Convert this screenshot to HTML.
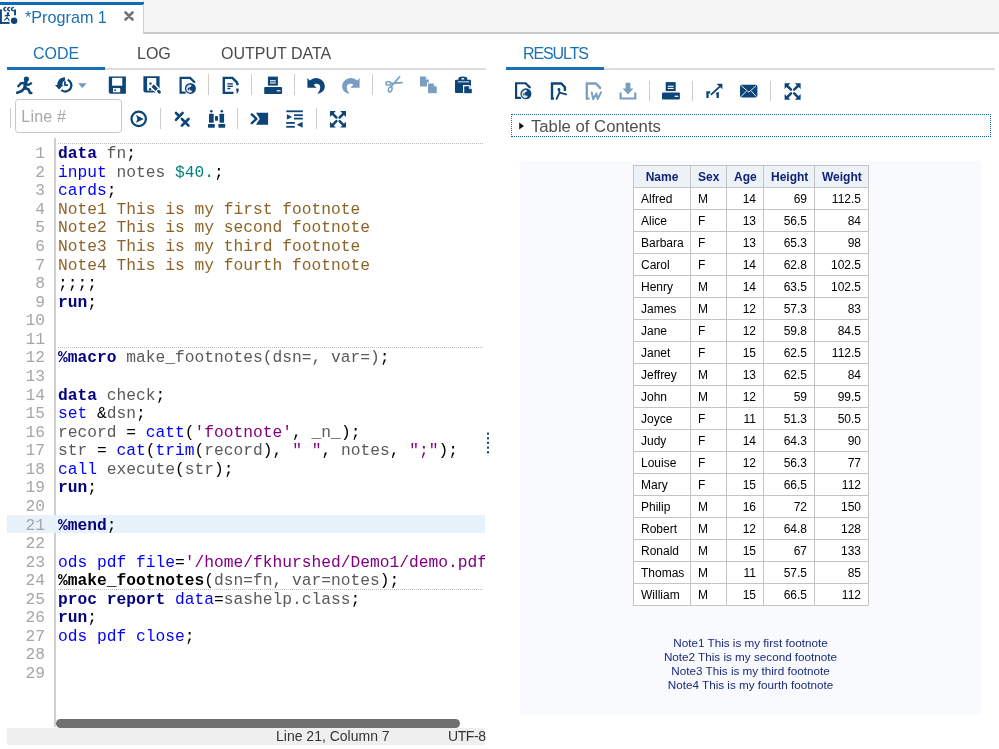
<!DOCTYPE html>
<html><head><meta charset="utf-8">
<style>
*{margin:0;padding:0;box-sizing:border-box}
html,body{width:999px;height:749px;overflow:hidden;background:#fff;font-family:"Liberation Sans",sans-serif}
.a{position:absolute}
#topbar{left:0;top:0;width:999px;height:34px;background:#f5f5f5;border-bottom:2px solid #c9c9c9}
#ptab{left:0;top:0;width:144px;height:34px;background:#fff;border-top:2px solid #f5f5f5;border-right:1px solid #cfcfcf}
#ptab .bl{left:0;top:0;width:143px;height:2.5px;background:#0d6ab4}
.tabt{font-size:16px;color:#4a4a4a;white-space:nowrap}
.sel{color:#1a70b5}
.sep{width:1px;background:#cdcdcd}
.ico{position:absolute}
#code{left:0;top:0}
.ln{position:absolute;left:0;width:45px;text-align:right;font-family:"Liberation Mono",monospace;font-size:16.25px;color:#a6a6a6;line-height:18.57px;height:18.57px}
.cl{position:absolute;left:58px;font-family:"Liberation Mono",monospace;font-size:16.25px;line-height:18.57px;height:18.57px;white-space:pre;color:#000}
.k{color:#000080;font-weight:bold}
.b{color:#0000ff}
.g{color:#5a5a5a}
.t{color:#008080}
.br{color:#8c6428}
.p{color:#800080}
.bk{color:#000;font-weight:bold}
.dot{position:absolute;left:58px;width:425px;height:0;border-top:1px dotted #bdbdbd}
table{border-collapse:collapse;table-layout:fixed;width:235px;font-family:"Liberation Sans",sans-serif;font-size:12px}
td,th{border:1px solid #c4c4c4;height:22px;padding:0 7px;color:#000;font-weight:normal;background:#fff}
th{background:#edf2f9;color:#112277;font-weight:bold;text-align:center}
td.r{text-align:right}
</style></head><body><div style="position:absolute;left:0;top:0;width:999px;height:749px;will-change:transform">
<!-- top tab bar -->
<div id="topbar" class="a"></div>
<div id="ptab" class="a"></div>
<div class="a" style="left:0;top:2px;width:144px;height:2.5px;background:#0d6ab4"></div>
<div class="a" style="left:143px;top:4px;width:1px;height:30px;background:#cfcfcf"></div>
<div class="a tabt sel" style="left:25px;top:7.6px;font-size:16.2px">*Program 1</div>
<svg class="ico" style="left:0;top:0" width="20" height="30" viewBox="0 0 20 30"><g fill="#0e4579"><rect x="0" y="9.4" width="1.9" height="14.5"/><rect x="0" y="22" width="9.6" height="1.9"/><rect x="14.1" y="9.2" width="1.9" height="6.3" rx="0.9"/><circle cx="14.1" cy="20.7" r="3.2"/></g><g fill="none" stroke="#0e4579" stroke-width="1.5" stroke-linecap="round"><path d="M5.6 7.4C4.3 7.6 3.9 8.4 3.9 9.1C3.9 9.8 4.3 10.6 5.6 10.8M9.4 7.4C8.1 7.6 7.7 8.4 7.7 9.1C7.7 9.8 8.1 10.6 9.4 10.8M13.2 7.4C11.9 7.6 11.5 8.4 11.5 9.1C11.5 9.8 11.9 10.6 13.2 10.8"/></g><g stroke="#0e4579" stroke-width="1.1" fill="none" stroke-linecap="round"><circle cx="8" cy="13.6" r="0.8" fill="#0e4579"/><path d="M7.6 14.8L6.8 17.8M5 16L6.4 15.2L9.6 15.6M6.8 17.8L4.6 20.2M6.8 17.8L8.8 19.2L9 20.6"/></g></svg>
<svg class="ico" style="left:123.8px;top:11px" width="10" height="10" viewBox="0 0 10 10"><path d="M1.5 1.5L8.5 8.5M8.5 1.5L1.5 8.5" stroke="#747474" stroke-width="2.6" stroke-linecap="round"/></svg>

<!-- code tabs -->
<div class="a tabt sel" style="left:33px;top:44.5px">CODE</div>
<div class="a tabt" style="left:137px;top:44.5px">LOG</div>
<div class="a tabt" style="left:221px;top:44.5px">OUTPUT DATA</div>
<div class="a" style="left:7px;top:68px;width:479px;height:1.5px;background:#dcdcdc"></div>
<div class="a" style="left:7px;top:67px;width:98px;height:3px;background:#1a70b5"></div>

<div class="a tabt sel" style="left:523px;top:44.5px;letter-spacing:-1.1px">RESULTS</div>
<div class="a" style="left:506px;top:68px;width:489px;height:1.5px;background:#dcdcdc"></div>
<div class="a" style="left:506px;top:67px;width:98px;height:3px;background:#1a70b5"></div>

<!-- toolbar separators -->
<div class="a sep" style="left:208px;top:74px;height:21px"></div>
<div class="a sep" style="left:251px;top:74px;height:21px"></div>
<div class="a sep" style="left:294px;top:74px;height:21px"></div>
<div class="a sep" style="left:372px;top:74px;height:21px"></div>
<div class="a sep" style="left:10px;top:108px;height:20px"></div>
<div class="a sep" style="left:160px;top:108px;height:21px"></div>
<div class="a sep" style="left:237px;top:108px;height:21px"></div>
<div class="a sep" style="left:316px;top:108px;height:21px"></div>
<div class="a sep" style="left:649px;top:80.5px;height:20px"></div>
<div class="a sep" style="left:692px;top:80.5px;height:20px"></div>
<div class="a sep" style="left:770px;top:80.5px;height:20px"></div>

<!-- line # input -->
<div class="a" style="left:15px;top:98.5px;width:106.5px;height:34.5px;border:1px solid #c8c8c8;border-radius:3.5px;background:#fff"></div>
<div class="a" style="left:21.3px;top:107.8px;font-size:16px;color:#a8a8a8;letter-spacing:0.2px">Line #</div>

<svg class="ico" style="left:0;top:0" width="999" height="749" viewBox="0 0 999 749">
<defs>
<g id="printer">
 <rect x="267.9" y="76.6" width="10" height="9" fill="#0e4579"/>
 <rect x="270" y="80.2" width="5.8" height="1.1" fill="#fff"/>
 <rect x="270" y="82.4" width="5.8" height="1.1" fill="#fff"/>
 <rect x="264.2" y="87.1" width="17.9" height="6.9" rx="1" fill="#0e4579"/>
 <rect x="276.8" y="90.2" width="3.7" height="1.2" fill="#fff"/>
</g>
<g id="expand" fill="#0e4579" stroke="#0e4579" stroke-width="2.5" stroke-linecap="round">
 <path d="M330 111.1H335.8L330 116.9Z" stroke="none"/><path d="M332.2 113.3L336.4 117.5"/>
 <path d="M346 111.1H340.2L346 116.9Z" stroke="none"/><path d="M343.8 113.3L339.6 117.5"/>
 <path d="M330 127.6H335.8L330 121.8Z" stroke="none"/><path d="M332.2 125.4L336.4 121.2"/>
 <path d="M346 127.6H340.2L346 121.8Z" stroke="none"/><path d="M343.8 125.4L339.6 121.2"/>
</g>
<g id="docglobe">
 <path d="M185 92.55H180.6V77.85H190.1L194.3 82" fill="none" stroke="#0e4579" stroke-width="2.2" stroke-linecap="round"/>
 <circle cx="190.4" cy="88.4" r="6.3" fill="#fff"/>
 <circle cx="190.4" cy="88.4" r="5.5" fill="#0e4579"/>
 <path d="M189.6 84.4C187.4 85 186.2 86.8 186.2 88.8C186.2 90.8 187.6 92.4 189.8 92.8C191.4 92.4 192.4 91.6 192.2 90.4C191 90.6 189.8 90.2 189.6 89.4C189.2 88.4 188.8 87.8 189.4 87.2C190.4 87 191.4 86.6 191.6 85.4C191.2 84.8 190.4 84.4 189.6 84.4Z" fill="#fff" opacity="0.85"/>
 <path d="M188 87.6L189.2 88.6L188.6 90.4L187.6 89.4Z" fill="#0e4579"/>
</g>
</defs>
<!-- row1 code toolbar -->
<g stroke="#0e4579" stroke-linecap="round" stroke-linejoin="round" fill="none">
 <circle cx="26.4" cy="79" r="2.6" fill="#0e4579" stroke="none"/>
 <path d="M25.9 81.5L24.7 88" stroke-width="3.4"/>
 <path d="M18.3 86.2L20.9 83.3L24.6 83" stroke-width="2.4"/>
 <path d="M25.5 83.9L28.5 84.9L31.2 83.3" stroke-width="2.2"/>
 <path d="M24.5 88.2L21.8 91L17.2 92.7" stroke-width="2.6"/>
 <path d="M25 88L28.6 89.5L30 93L31.3 93" stroke-width="2.6"/>
</g>
<path d="M67.7 79.8 A6.1 6.1 0 1 1 61.3 90" fill="none" stroke="#0e4579" stroke-width="2.3"/>
<path d="M64.9 77.3C60.2 77.5 57.3 80.6 57.3 85L55 85L59.1 89.5L63.3 85L62.3 85C62.3 82.6 63.3 81.1 65.2 80.5Z" fill="#0e4579"/>
<path d="M64.9 81.8V85.1H67.3" fill="none" stroke="#0e4579" stroke-width="1.7" stroke-linecap="round" stroke-linejoin="round"/>
<path d="M78.2 83.3H86.6L82.4 87.9Z" fill="#6f97be"/>
<!-- save -->
<path d="M108.8 76.4H125.9V93.8H110.6Q108.8 93.8 108.8 92Z" fill="#0e4579"/>
<rect x="112.1" y="77.9" width="10.2" height="7.8" fill="#fff"/>
<rect x="113" y="88.1" width="7.2" height="4.2" fill="#fff"/>
<circle cx="115.1" cy="90.2" r="0.9" fill="#0e4579"/>
<!-- save as -->
<path d="M143.4 76.3H159.6V92.4H145.2Q143.4 92.4 143.4 90.6Z" fill="#0e4579"/>
<rect x="147.1" y="78" width="9.2" height="12.6" fill="#fff"/>
<path d="M150.5 83.6L159.4 92.2" stroke="#fff" stroke-width="6" stroke-linecap="round"/>
<path d="M152.6 85.6L156.8 89.8" stroke="#0e4579" stroke-width="3.4"/>
<path d="M158.5 91.3L159.5 92.3" stroke="#0e4579" stroke-width="2.8" stroke-linecap="round"/>
<circle cx="150.5" cy="83.6" r="1.3" fill="#2d5a88"/>
<circle cx="150.1" cy="89.3" r="1.2" fill="#0e4579"/>
<!-- export doc globe -->
<use href="#docglobe"/>
<!-- doc lines -->
<path d="M233.5 92.9H223.8V77.9H232.4L236.6 82.1V83" fill="none" stroke="#0e4579" stroke-width="2.4"/>
<rect x="227.4" y="83.2" width="5.5" height="1.4" fill="#0e4579"/>
<rect x="227.4" y="85.6" width="5.5" height="1.4" fill="#0e4579"/>
<rect x="227.4" y="87.9" width="3" height="1.4" fill="#0e4579"/>
<circle cx="237.4" cy="84" r="1.4" fill="#0e4579"/>
<path d="M236.2 88.4H238.6V90.8C238.6 92 237.8 93 236.6 93.6L236.2 93C236.8 92.4 237 91.8 237 91.2H236.2Z" fill="#0e4579"/>
<!-- printer -->
<use href="#printer"/>
<!-- undo -->
<path id="undoP" d="M307.4 78L309.8 80.4C311.8 78.9 313.8 78 316 78C321 78 324.8 81.8 324.8 86.3C324.8 90.5 321.5 93.6 317.3 93.6C319.5 91.8 320.2 89.2 320.2 87C320.2 85 318.5 83.8 316.2 83.8C315.2 83.8 314.4 84.3 313.8 85L316.6 87.8H307.4Z" fill="#0e4579"/>
<!-- redo -->
<g transform="translate(667,0) scale(-1,1)">
<path d="M307.4 78L309.8 80.4C311.8 78.9 313.8 78 316 78C321 78 324.8 81.8 324.8 86.3C324.8 90.5 321.5 93.6 317.3 93.6C319.5 91.8 320.2 89.2 320.2 87C320.2 85 318.5 83.8 316.2 83.8C315.2 83.8 314.4 84.3 313.8 85L316.6 87.8H307.4Z" fill="#789dc0"/>
</g>
<!-- scissors -->
<g fill="none" stroke="#7a9ec0" stroke-width="1.5">
 <ellipse cx="388.4" cy="83.4" rx="2.5" ry="1.7"/>
 <ellipse cx="390.2" cy="89.4" rx="1.7" ry="2.7" transform="rotate(20 390.2 89.4)"/>
 <path d="M390.8 83.4L402 82.6M391.2 86.6L399.6 76.8" stroke-width="1.7" stroke-linecap="round"/>
</g>
<!-- copy -->
<path d="M420 76.5H425.6L428.8 79.7V86.5H420Z" fill="#7a9ec0"/>
<path d="M426.2 76.8V79.2H428.6" fill="none" stroke="#fff" stroke-width="0.9"/>
<path d="M427.5 83H433.9L437.3 86.4V93.7H427.5Z" fill="#7a9ec0" stroke="#fff" stroke-width="1.1"/>
<path d="M434.3 83.6V86H436.7" fill="none" stroke="#fff" stroke-width="0.9"/>
<!-- paste -->
<rect x="455" y="79.8" width="16" height="13.3" rx="1" fill="#0e4579"/>
<path d="M458.4 80.6V78.6C458.4 77.3 459.6 76.4 462.8 76.4C466 76.4 467.2 77.3 467.2 78.6V80.6Z" fill="#0e4579"/>
<rect x="461.6" y="78.1" width="2.6" height="1.4" fill="#fff"/>
<rect x="457.8" y="81.4" width="11.4" height="0.9" fill="#fff"/>
<path d="M463.6 85.6H469.2L472.4 88.8V93.8H463.6Z" fill="#0e4579" stroke="#fff" stroke-width="1.2"/>
<path d="M469.4 86.2V88.6H471.8" fill="none" stroke="#fff" stroke-width="0.8"/>
<!-- row2 -->
<circle cx="138.7" cy="118.9" r="7.2" fill="none" stroke="#0e4579" stroke-width="2.2"/>
<path d="M136 115L143.8 118.9L136 122.7L137.4 118.9Z" fill="#0e4579"/>
<g stroke="#0e4579" stroke-width="2.6" stroke-linecap="round">
 <path d="M176 113L179.4 116.2M182.6 113L176 119.8"/>
 <path d="M181.9 119L188.5 125.6M188.5 119L181.9 125.6" stroke="#fff" stroke-width="4.4"/>
 <path d="M181.9 119L188.5 125.6M188.5 119L181.9 125.6"/>
</g>
<g fill="#0e4579">
 <circle cx="211.3" cy="111.2" r="1.3"/><circle cx="221.8" cy="111.2" r="1.3"/>
 <rect x="209" y="113.7" width="4.7" height="9" rx="0.6"/>
 <rect x="219.5" y="113.7" width="4.6" height="9" rx="0.6"/>
 <rect x="215" y="116" width="3" height="4.7" rx="0.5"/>
 <rect x="208" y="124" width="6.8" height="3.7" rx="0.6"/>
 <rect x="218.4" y="124" width="6.8" height="3.7" rx="0.6"/>
</g>
<path d="M251.8 114.4L256.4 118.8L251.8 123.2" fill="none" stroke="#0e4579" stroke-width="2.4" stroke-linecap="round" stroke-linejoin="round"/>
<path d="M256 112.7H268.1V124.8H256L259.8 118.8Z" fill="#0e4579"/>
<g fill="#0e4579">
 <rect x="286.3" y="110.4" width="16.5" height="1.8"/>
 <path d="M286.9 114.2V119.6L292.2 116.9Z"/>
 <rect x="294" y="114.3" width="8.8" height="1.8"/>
 <rect x="294" y="117.7" width="8.8" height="1.8"/>
 <rect x="286.2" y="122" width="8.6" height="1.8"/>
 <rect x="286.2" y="125.9" width="8.6" height="1.8"/>
 <path d="M296.6 124.8L302.6 121.8V127.8Z"/>
</g>
<use href="#expand"/>
<!-- results toolbar -->
<use href="#docglobe" transform="translate(335.5,5.4)"/>
<path d="M554 98.6H552V83.5H561.2L564.9 87.2V91" fill="none" stroke="#0e4579" stroke-width="2.4"/>
<circle cx="558.9" cy="89.2" r="1.3" fill="#0e4579"/>
<path d="M559 89.4L559.5 92.6L566.2 94.3M559.5 92.6L556.6 98.8" fill="none" stroke="#0e4579" stroke-width="1.9" stroke-linecap="round" stroke-linejoin="round"/>
<path d="M589.5 98.6H586.8V83.5H595.8L599.9 87.6V89" fill="none" stroke="#7a9ec0" stroke-width="2.3"/>
<path d="M591.6 91.6L593.2 99.2L596.4 93.4L597.6 99.2L601.4 91.6" fill="none" stroke="#7a9ec0" stroke-width="1.9" stroke-linejoin="round"/>
<path d="M625.6 82.7H630.4V88.6H633.4L628 94.6L622.6 88.6H625.6Z" fill="#7a9ec0"/>
<path d="M620.6 92.6V98.5H635.3V92.6" fill="none" stroke="#7a9ec0" stroke-width="2.2"/>
<use href="#printer" transform="translate(397.8,5.5)"/>
<path d="M716.5 83.7H722.4V89.3Z" fill="#0e4579"/>
<path d="M720.8 85.6L711.4 94.4" stroke="#0e4579" stroke-width="1.8" stroke-linecap="round"/>
<path d="M707.5 98V92.3H710.2" fill="none" stroke="#0e4579" stroke-width="2.3"/>
<path d="M717.7 98V93.4L716.2 94" fill="none" stroke="#0e4579" stroke-width="2.3"/>
<rect x="740" y="84.7" width="17.4" height="12.8" rx="1.8" fill="#0e4579"/>
<path d="M741.2 85.6L748.8 92.2L756.3 85.6M741.2 96.6L746.2 91.2M756.3 96.6L751.4 91.2" fill="none" stroke="#fff" stroke-width="0.9"/>
<use href="#expand" transform="translate(454.6,-27.8)"/>
</svg>


<!-- TOC -->
<div class="a" style="left:511px;top:114px;width:480px;height:23px;border:1px dotted #1a6aaa"></div>
<svg class="ico" style="left:518px;top:122px" width="8" height="10"><path d="M1.2 0.4L6 4L1.2 7.6Z" fill="#111"/></svg>
<div class="a" style="left:531px;top:116.6px;font-size:16.7px;color:#505050">Table of Contents</div>

<!-- editor -->
<div class="a" style="left:54px;top:138px;width:1.5px;height:589px;background:#cfcfcf"></div>
<div class="a" style="left:7px;top:514.5px;width:478px;height:18.3px;background:#e8f2fa"></div>
<div class="a" style="left:0;top:0;width:485px;height:720px;overflow:hidden">
<div class="ln" style="top:145.10px">1</div>
<div class="cl" style="top:145.10px"><span class="k">data</span> <span class="g">fn</span>;</div>
<div class="ln" style="top:163.67px">2</div>
<div class="cl" style="top:163.67px"><span class="b">input</span> <span class="g">notes</span> <span class="t">$40.</span>;</div>
<div class="ln" style="top:182.24px">3</div>
<div class="cl" style="top:182.24px"><span class="b">cards</span>;</div>
<div class="ln" style="top:200.81px">4</div>
<div class="cl" style="top:200.81px"><span class="br">Note1 This is my first footnote</span></div>
<div class="ln" style="top:219.38px">5</div>
<div class="cl" style="top:219.38px"><span class="br">Note2 This is my second footnote</span></div>
<div class="ln" style="top:237.95px">6</div>
<div class="cl" style="top:237.95px"><span class="br">Note3 This is my third footnote</span></div>
<div class="ln" style="top:256.52px">7</div>
<div class="cl" style="top:256.52px"><span class="br">Note4 This is my fourth footnote</span></div>
<div class="ln" style="top:275.09px">8</div>
<div class="cl" style="top:275.09px">;;;;</div>
<div class="ln" style="top:293.66px">9</div>
<div class="cl" style="top:293.66px"><span class="k">run</span>;</div>
<div class="ln" style="top:312.23px">10</div>
<div class="cl" style="top:312.23px"></div>
<div class="ln" style="top:330.80px">11</div>
<div class="cl" style="top:330.80px"></div>
<div class="ln" style="top:349.37px">12</div>
<div class="cl" style="top:349.37px"><span class="k">%macro</span> <span class="g">make_footnotes(dsn=, var=)</span>;</div>
<div class="ln" style="top:367.94px">13</div>
<div class="cl" style="top:367.94px"></div>
<div class="ln" style="top:386.51px">14</div>
<div class="cl" style="top:386.51px"><span class="k">data</span> <span class="g">check</span>;</div>
<div class="ln" style="top:405.08px">15</div>
<div class="cl" style="top:405.08px"><span class="b">set</span> &amp;<span class="g">dsn</span>;</div>
<div class="ln" style="top:423.65px">16</div>
<div class="cl" style="top:423.65px"><span class="g">record</span> = <span class="b">catt</span>(<span class="p">'footnote'</span>, <span class="g">_n_</span>);</div>
<div class="ln" style="top:442.22px">17</div>
<div class="cl" style="top:442.22px"><span class="g">str</span> = <span class="b">cat</span>(<span class="b">trim</span>(<span class="g">record</span>), <span class="p">" "</span>, <span class="g">notes</span>, <span class="p">";"</span>);</div>
<div class="ln" style="top:460.79px">18</div>
<div class="cl" style="top:460.79px"><span class="b">call</span> <span class="g">execute</span>(<span class="g">str</span>);</div>
<div class="ln" style="top:479.36px">19</div>
<div class="cl" style="top:479.36px"><span class="k">run</span>;</div>
<div class="ln" style="top:497.93px">20</div>
<div class="cl" style="top:497.93px"></div>
<div class="ln" style="top:516.50px">21</div>
<div class="cl" style="top:516.50px"><span class="k">%mend</span>;</div>
<div class="ln" style="top:535.07px">22</div>
<div class="cl" style="top:535.07px"></div>
<div class="ln" style="top:553.64px">23</div>
<div class="cl" style="top:553.64px"><span class="b">ods pdf file</span>=<span class="p">'/home/fkhurshed/Demo1/demo.pdf'</span>;</div>
<div class="ln" style="top:572.21px">24</div>
<div class="cl" style="top:572.21px"><span class="bk">%make_footnotes</span>(<span class="g">dsn=fn, var=notes</span>);</div>
<div class="ln" style="top:590.78px">25</div>
<div class="cl" style="top:590.78px"><span class="k">proc report</span> <span class="b">data</span>=<span class="g">sashelp.class</span>;</div>
<div class="ln" style="top:609.35px">26</div>
<div class="cl" style="top:609.35px"><span class="k">run</span>;</div>
<div class="ln" style="top:627.92px">27</div>
<div class="cl" style="top:627.92px"><span class="b">ods pdf close</span>;</div>
<div class="ln" style="top:646.49px">28</div>
<div class="cl" style="top:646.49px"></div>
<div class="ln" style="top:665.06px">29</div>
<div class="cl" style="top:665.06px"></div>
<div class="dot" style="top:143.20px"></div>
<div class="dot" style="top:347.47px"></div>
<div class="dot" style="top:588.88px"></div>
</div>

<div class="a" style="left:56px;top:719px;width:404px;height:8.5px;background:#707070;border-radius:4.5px"></div>
<div class="a" style="left:7px;top:728px;width:478px;height:17px;background:#efefef"></div>
<div class="a" style="left:276px;top:728px;font-size:14px;color:#333">Line 21, Column 7</div>
<div class="a" style="left:448px;top:728px;width:38px;overflow:hidden;white-space:nowrap;letter-spacing:-0.4px;font-size:14px;color:#333">UTF-8</div>

<!-- splitter dots -->
<svg class="ico" style="left:486px;top:432px" width="4" height="22"><g fill="#0a3a6a"><rect x="1" y="0.6" width="2" height="2"/><rect x="1" y="5.3" width="2" height="2"/><rect x="1" y="9.9" width="2" height="2"/><rect x="1" y="14.6" width="2" height="2"/><rect x="1" y="19.3" width="2" height="2"/></g></svg>

<!-- results -->
<div class="a" style="left:520px;top:161px;width:461px;height:553px;background:#f9fafe"></div>
<div class="a" style="left:633px;top:165px">
<table>
<tr><th style="width:57px">Name</th><th style="width:36px">Sex</th><th style="width:37px">Age</th><th style="width:51px">Height</th><th style="width:54px">Weight</th></tr>
<tr><td>Alfred</td><td>M</td><td class="r">14</td><td class="r">69</td><td class="r">112.5</td></tr>
<tr><td>Alice</td><td>F</td><td class="r">13</td><td class="r">56.5</td><td class="r">84</td></tr>
<tr><td>Barbara</td><td>F</td><td class="r">13</td><td class="r">65.3</td><td class="r">98</td></tr>
<tr><td>Carol</td><td>F</td><td class="r">14</td><td class="r">62.8</td><td class="r">102.5</td></tr>
<tr><td>Henry</td><td>M</td><td class="r">14</td><td class="r">63.5</td><td class="r">102.5</td></tr>
<tr><td>James</td><td>M</td><td class="r">12</td><td class="r">57.3</td><td class="r">83</td></tr>
<tr><td>Jane</td><td>F</td><td class="r">12</td><td class="r">59.8</td><td class="r">84.5</td></tr>
<tr><td>Janet</td><td>F</td><td class="r">15</td><td class="r">62.5</td><td class="r">112.5</td></tr>
<tr><td>Jeffrey</td><td>M</td><td class="r">13</td><td class="r">62.5</td><td class="r">84</td></tr>
<tr><td>John</td><td>M</td><td class="r">12</td><td class="r">59</td><td class="r">99.5</td></tr>
<tr><td>Joyce</td><td>F</td><td class="r">11</td><td class="r">51.3</td><td class="r">50.5</td></tr>
<tr><td>Judy</td><td>F</td><td class="r">14</td><td class="r">64.3</td><td class="r">90</td></tr>
<tr><td>Louise</td><td>F</td><td class="r">12</td><td class="r">56.3</td><td class="r">77</td></tr>
<tr><td>Mary</td><td>F</td><td class="r">15</td><td class="r">66.5</td><td class="r">112</td></tr>
<tr><td>Philip</td><td>M</td><td class="r">16</td><td class="r">72</td><td class="r">150</td></tr>
<tr><td>Robert</td><td>M</td><td class="r">12</td><td class="r">64.8</td><td class="r">128</td></tr>
<tr><td>Ronald</td><td>M</td><td class="r">15</td><td class="r">67</td><td class="r">133</td></tr>
<tr><td>Thomas</td><td>M</td><td class="r">11</td><td class="r">57.5</td><td class="r">85</td></tr>
<tr><td>William</td><td>M</td><td class="r">15</td><td class="r">66.5</td><td class="r">112</td></tr>
</table>
</div>
<div class="a" id="fn" style="left:520px;top:636px;width:461px;text-align:center;font-size:11.7px;line-height:14px;color:#1a2a7a">Note1 This is my first footnote<br>Note2 This is my second footnote<br>Note3 This is my third footnote<br>Note4 This is my fourth footnote</div>
</div></body></html>
